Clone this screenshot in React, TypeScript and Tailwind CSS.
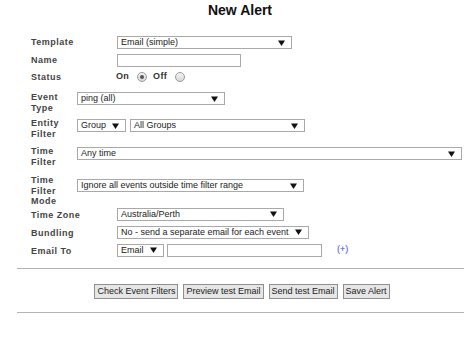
const font = "font-['Liberation_Sans',Arial,sans-serif]";

function Arrow() {
  return (
    <svg width="7" height="6" viewBox="0 0 7 6" className="shrink-0">
      <path d="M0 0.5 H7 L3.5 6 Z" fill="#111" />
    </svg>
  );
}

function Select({ value, width, className = "" }: { value: string; width: number; className?: string }) {
  return (
    <div
      className={`flex h-[13px] shrink-0 items-center justify-between border border-[#a9a9a9] bg-white pl-[3px] pr-[6px] text-[9px] leading-none text-[#222] ${className}`}
      style={{ width }}
    >
      <span className="whitespace-nowrap">{value}</span>
      <Arrow />
    </div>
  );
}

function Input({ width }: { width: number }) {
  return <div className="h-[13px] shrink-0 border border-[#a9a9a9] bg-white" style={{ width }} />;
}

function Label({ children, className = "" }: { children: React.ReactNode; className?: string }) {
  return (
    <div className={`shrink-0 text-[9px] font-bold leading-[10.5px] tracking-[0.5px] text-[#444] ${className}`}>
      {children}
    </div>
  );
}

function Radio({ checked }: { checked?: boolean }) {
  return (
    <span className="flex h-[10px] w-[10px] items-center justify-center rounded-full border border-[#9a9a9a] bg-gradient-to-b from-[#f4f4f4] to-[#d8d8d8]">
      {checked && <span className="h-[4px] w-[4px] rounded-full bg-[#555]" />}
    </span>
  );
}

function Button({ children }: { children: React.ReactNode }) {
  return (
    <button className="h-[15px] border border-[#8f8f8f] bg-[#e6e6e6] px-[2px] text-[9px] leading-none text-[#222]">
      {children}
    </button>
  );
}

export default function App() {
  return (
    <div className={`h-[351px] w-[474px] overflow-hidden bg-white ${font}`}>
      <h1 className="pl-[6px] pt-[1px] text-center text-[14px] font-bold leading-[19px] text-[#111]">New Alert</h1>

      <div className="mt-[16px] flex flex-col pl-[31px]">
        <div className="flex h-[13px] items-center">
          <Label className="w-[86px]">Template</Label>
          <Select value="Email (simple)" width={175} />
        </div>

        <div className="mt-[5px] flex h-[13px] items-center">
          <Label className="w-[86px]">Name</Label>
          <Input width={124} />
        </div>

        <div className="mt-[4px] flex h-[12px] items-center">
          <Label className="w-[85px]">Status</Label>
          <span className="text-[9px] font-bold tracking-[0.3px] text-[#333]">On</span>
          <span className="ml-[8px]"><Radio checked /></span>
          <span className="ml-[6px] text-[9px] font-bold tracking-[0.3px] text-[#333]">Off</span>
          <span className="ml-[8px]"><Radio /></span>
        </div>

        <div className="mt-[9px] flex items-start">
          <Label className="w-[46px]">Event<br />Type</Label>
          <Select value="ping (all)" width={148} />
        </div>

        <div className="mt-[5px] flex items-start">
          <Label className="w-[46px]">Entity<br />Filter</Label>
          <div className="mt-[1px] flex gap-[4px]">
            <Select value="Group" width={49} />
            <Select value="All Groups" width={175} />
          </div>
        </div>

        <div className="mt-[7px] flex items-start">
          <Label className="w-[46px]">Time<br />Filter</Label>
          <Select value="Any time" width={385} className="mt-[1px]" />
        </div>

        <div className="mt-[8px] flex items-start">
          <Label className="w-[46px]">Time<br />Filter<br />Mode</Label>
          <Select value="Ignore all events outside time filter range" width={227} className="mt-[4px]" />
        </div>

        <div className="mt-[1px] flex h-[13px] items-center">
          <Label className="mt-[3px] w-[86px]">Time Zone</Label>
          <Select value="Australia/Perth" width={167} />
        </div>

        <div className="mt-[5px] flex h-[13px] items-center">
          <Label className="mt-[3px] w-[86px]">Bundling</Label>
          <Select value="No - send a separate email for each event" width={192} />
        </div>

        <div className="mt-[5px] flex h-[13px] items-center">
          <Label className="mt-[3px] w-[86px]">Email To</Label>
          <Select value="Email" width={47} />
          <div className="ml-[3px]"><Input width={155} /></div>
          <span className="ml-[15px] text-[9px] text-[#3b48c4]">(+)</span>
        </div>
      </div>

      <div className="mx-[17px] mt-[11px] w-[447px] border-t border-[#b4b4b4]" />

      <div className="mt-[15px] flex justify-center gap-[5px] pl-[10px]">
        <Button>Check Event Filters</Button>
        <Button>Preview test Email</Button>
        <Button>Send test Email</Button>
        <Button>Save Alert</Button>
      </div>

      <div className="mx-[17px] mt-[13px] w-[447px] border-t border-[#b4b4b4]" />
    </div>
  );
}
